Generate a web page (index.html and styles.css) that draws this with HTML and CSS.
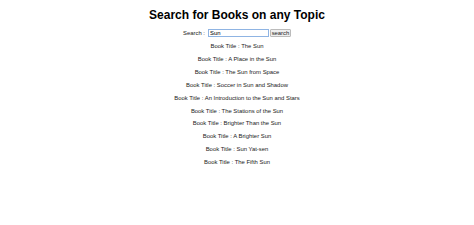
FILE: index.html
```html
<!DOCTYPE html>
<html lang="en">
  <head>
    <meta charset="UTF-8" />
    <meta name="viewport" content="width=device-width, initial-scale=1.0" />
    <title>Book Search</title>
    <link rel="stylesheet" href="styles.css">
  </head>
  <body>
    <h1>Search for Books on any Topic</h1>

    <div class="search">
      <label for="topic">Search :</label>
      <input type="text" id="topic" value="Sun" />
      <button>search</button>
    </div>

    <div class="results">
      <p>Book Title : The Sun</p>
      <p>Book Title : A Place in the Sun</p>
      <p>Book Title : The Sun from Space</p>
      <p>Book Title : Soccer in Sun and Shadow</p>
      <p>Book Title : An Introduction to the Sun and Stars</p>
      <p>Book Title : The Stations of the Sun</p>
      <p>Book Title : Brighter Than the Sun</p>
      <p>Book Title : A Brighter Sun</p>
      <p>Book Title : Sun Yat-sen</p>
      <p>Book Title : The Fifth Sun</p>
    </div>
  </body>
</html>
```

FILE: styles.css
```css
body {
  font-family: "Liberation Sans", Arial, sans-serif;
  margin: 0;
  padding: 0;
  background: #fff;
  color: #222;
  text-align: center;
}

h1 {
  font-size: 12px;
  font-weight: bold;
  color: #000;
  margin: 8px 0 6px;
}

.search {
  display: flex;
  justify-content: center;
  align-items: center;
  font-size: 5.9px;
  height: 9px;
}

.search label {
  margin-right: 3px;
}

.search input {
  width: 57px;
  height: 6px;
  padding: 0 1px;
  font-size: 5.9px;
  font-family: inherit;
  border: 1px solid #8fb4e3;
  outline: none;
  margin: 0;
}

.search button {
  height: 8px;
  width: 21px;
  padding: 0;
  font-size: 5.9px;
  font-family: inherit;
  background: #efefef;
  border: 1px solid #bbb;
  border-radius: 1px;
  margin: 0 0 0 1px;
  color: #222;
}

.results {
  margin-top: 3px;
}

.results p {
  font-size: 5.9px;
  margin: 0;
  line-height: 12.9px;
}
```
